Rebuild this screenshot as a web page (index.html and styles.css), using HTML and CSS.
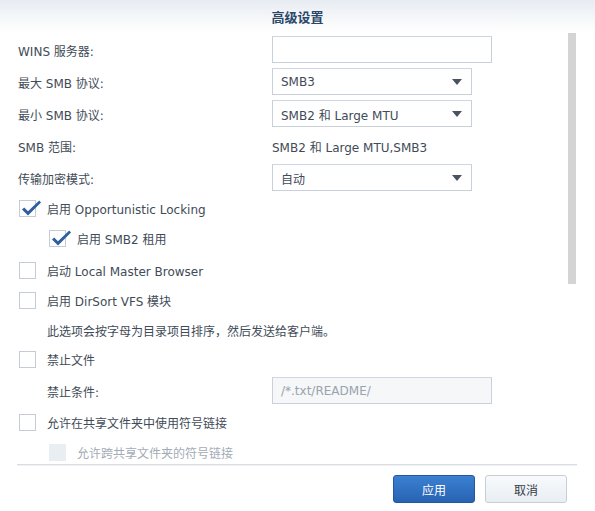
FILE: index.html
```html
<!DOCTYPE html>
<html lang="zh-CN">
<head>
<meta charset="utf-8">
<title>高级设置</title>
<link rel="stylesheet" href="styles.css">
</head>
<body>
<div class="dialog">
  <div class="header"><span class="title">高级设置</span></div>
  <div class="body">
    <div class="content">
      <div class="form-row">
        <div class="label">WINS 服务器:</div>
        <div class="field field-wide"></div>
      </div>
      <div class="form-row">
        <div class="label">最大 SMB 协议:</div>
        <div class="field select"><span>SMB3</span><i class="arrow"></i></div>
      </div>
      <div class="form-row">
        <div class="label">最小 SMB 协议:</div>
        <div class="field select"><span>SMB2 和 Large MTU</span><i class="arrow"></i></div>
      </div>
      <div class="form-row">
        <div class="label">SMB 范围:</div>
        <div class="value">SMB2 和 Large MTU,SMB3</div>
      </div>
      <div class="form-row">
        <div class="label">传输加密模式:</div>
        <div class="field select"><span>自动</span><i class="arrow"></i></div>
      </div>

      <div class="checks">
        <div class="check-row">
          <span class="box checked"><svg class="tick" viewBox="0 0 20 16" width="20" height="16"><path d="M1 9.6 L3.2 7.6 L7 11.2 L18.2 0.6 L20 2.4 L7 15.6 Z" fill="#2f5f9d"/></svg></span>
          <span class="text">启用 Opportunistic Locking</span>
        </div>
        <div class="check-row indent">
          <span class="box checked"><svg class="tick" viewBox="0 0 20 16" width="20" height="16"><path d="M1 9.6 L3.2 7.6 L7 11.2 L18.2 0.6 L20 2.4 L7 15.6 Z" fill="#2f5f9d"/></svg></span>
          <span class="text">启用 SMB2 租用</span>
        </div>
        <div class="check-row gap-top">
          <span class="box"></span>
          <span class="text">启动 Local Master Browser</span>
        </div>
        <div class="check-row">
          <span class="box"></span>
          <span class="text">启用 DirSort VFS 模块</span>
        </div>
        <div class="desc">此选项会按字母为目录项目排序，然后发送给客户端。</div>
        <div class="check-row">
          <span class="box"></span>
          <span class="text">禁止文件</span>
        </div>
        <div class="form-row sub">
          <div class="label sub-label">禁止条件:</div>
          <div class="field field-wide disabled">/*.txt/README/</div>
        </div>
        <div class="check-row">
          <span class="box"></span>
          <span class="text">允许在共享文件夹中使用符号链接</span>
        </div>
        <div class="check-row indent">
          <span class="box box-disabled"></span>
          <span class="text text-disabled">允许跨共享文件夹的符号链接</span>
        </div>
      </div>
    </div>
    <div class="scrollbar"><div class="thumb"></div></div>
  </div>
  <div class="separator"></div>
  <div class="footer">
    <button class="btn btn-primary">应用</button>
    <button class="btn btn-default">取消</button>
  </div>
</div>
</body>
</html>
```

FILE: styles.css
```css
* { box-sizing: border-box; }
html, body { margin: 0; padding: 0; background: #ffffff; }
body {
  font-family: "DejaVu Sans", "Noto Sans CJK SC", sans-serif;
  font-size: 12px;
  color: #414b57;
}
.dialog {
  width: 595px;
  height: 511px;
  display: flex;
  flex-direction: column;
  overflow: hidden;
  background: #ffffff;
}
.header {
  height: 33px;
  flex: none;
  display: flex;
  align-items: center;
  justify-content: center;
  background: linear-gradient(to bottom, #e7ecf2 0%, #f6f8fa 60%, #ffffff 100%);
}
.title {
  font-weight: bold;
  font-size: 13px;
  color: #2a4769;
}
.body {
  height: 431px;
  flex: none;
  display: flex;
  overflow: hidden;
}
.content {
  flex: 1;
  padding: 3px 0 0 18px;
  display: flex;
  flex-direction: column;
  overflow: hidden;
}
.scrollbar {
  width: 8px;
  flex: none;
  margin-right: 19px;
}
.thumb {
  width: 8px;
  height: 251px;
  background: #d4d4d4;
}
.form-row {
  display: flex;
  align-items: center;
  height: 27px;
  margin-bottom: 5px;
  flex: none;
}
.label {
  width: 254px;
  flex: none;
  padding-top: 2px;
}
.value { padding-top: 2px; }
.field {
  height: 27px;
  border: 1px solid #c8d0da;
  border-top-color: #cfd6e3;
  background: #ffffff;
  display: flex;
  align-items: center;
  padding: 1px 8px 0 8px;
  flex: none;
}
.field-wide { width: 220px; }
.select {
  width: 200px;
  justify-content: space-between;
  padding-right: 9px;
}
.arrow {
  width: 0;
  height: 0;
  border-left: 5px solid transparent;
  border-right: 5px solid transparent;
  border-top: 6px solid #4a5361;
}
.disabled {
  background: #f5f7f9;
  color: #9aa3ad;
}
.checks {
  margin-top: -3px;
  display: flex;
  flex-direction: column;
}
.check-row {
  display: flex;
  align-items: center;
  height: 30px;
  flex: none;
  padding-left: 1px;
}
.check-row.indent { padding-left: 31px; }
.check-row.gap-top { margin-top: 2px; }
.box {
  width: 17px;
  height: 17px;
  border: 1px solid #c5ccd6;
  background: #ffffff;
  flex: none;
  position: relative;
  margin-right: 11px;
}
.box-disabled {
  background: #e9eef3;
  border-color: #e9eef3;
}
.tick {
  position: absolute;
  left: 1px;
  top: -1px;
  display: block;
}
.text {
  line-height: 16px;
  padding-top: 3px;
}
.text-disabled { color: #a3abb6; }
.desc {
  height: 29px;
  flex: none;
  display: flex;
  align-items: center;
  padding: 2px 0 0 29px;
}
.form-row.sub {
  margin-top: 3px;
  margin-bottom: 3px;
}
.sub-label {
  width: 254px;
  padding-left: 29px;
}
.separator {
  flex: none;
  height: 2px;
  margin: 0 18px 0 17px;
  border-top: 1px solid #d9dde2;
  background: #eff1f3;
}
.footer {
  flex: none;
  display: flex;
  justify-content: flex-end;
  gap: 10px;
  padding: 9px 28px 0 0;
}
.btn {
  width: 82px;
  height: 28px;
  border-radius: 3px;
  font-family: "DejaVu Sans", "Noto Sans CJK SC", sans-serif;
  font-size: 12px;
  padding: 0;
  margin: 0;
  cursor: pointer;
}
.btn-primary {
  background: linear-gradient(to bottom, #3b80d1 0%, #2863b3 100%);
  border: 1px solid #2457a0;
  color: #ffffff;
}
.btn-default {
  background: linear-gradient(to bottom, #f8fafc 0%, #e9eef3 100%);
  border: 1px solid #c6ced8;
  color: #333c47;
}
```
